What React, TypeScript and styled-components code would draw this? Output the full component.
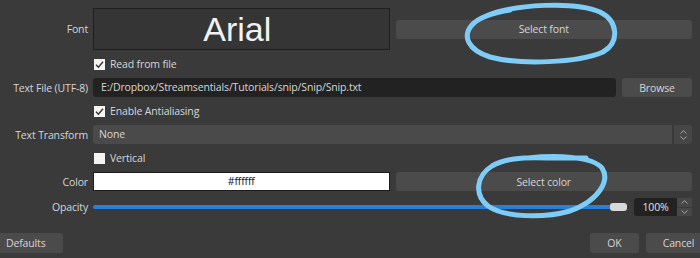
import styled, { createGlobalStyle } from "styled-components";

const GlobalStyle = createGlobalStyle`
  html, body {
    margin: 0;
    padding: 0;
    background: #3a3a3a;
    overflow: hidden;
  }
  body {
    font-family: "Open Sans", "Noto Sans", sans-serif;
    font-size: 10.5px;
    letter-spacing: -0.15px;
    color: #d6d6d6;
  }
`;

const Window = styled.div`
  position: relative;
  width: 700px;
  height: 258px;
  overflow: hidden;
  display: flex;
  flex-direction: column;
`;

const Scroll = styled.div`
  height: 228px;
  overflow: hidden;
  box-sizing: border-box;
  padding: 8px 8px 0 0;
`;

const Form = styled.div`
  display: grid;
  grid-template-columns: 88px 1fr;
  column-gap: 5px;
  row-gap: 4px;
  align-items: center;
`;

const Label = styled.div`
  text-align: right;
  white-space: nowrap;
`;

const Split = styled.div<{ $cols: string; $gap?: number }>`
  display: grid;
  grid-template-columns: ${(p) => p.$cols};
  column-gap: ${(p) => p.$gap ?? 6}px;
  align-items: center;
`;

const Preview = styled.div`
  height: 42px;
  box-sizing: border-box;
  border: 1px solid #1f1f1f;
  background: #353535;
  display: flex;
  align-items: center;
  justify-content: center;
  font-family: "Liberation Sans", Arial, sans-serif;
  font-size: 34px;
  letter-spacing: 0;
  color: #f2f2f2;
  padding-right: 8px;
`;

const Button = styled.button<{ $w?: number }>`
  height: 19px;
  width: ${(p) => (p.$w ? `${p.$w}px` : "100%")};
  border: none;
  border-radius: 3px;
  background: #4b4b4b;
  color: #d6d6d6;
  font: inherit;
  letter-spacing: inherit;
  padding: 0;
`;

const TextInput = styled.div`
  height: 19px;
  line-height: 19px;
  border-radius: 3px;
  background: #222222;
  padding: 0 8px;
  white-space: nowrap;
  overflow: hidden;
`;

const CheckRow = styled.div`
  height: 20px;
  display: flex;
  align-items: center;
  gap: 5px;
  padding-left: 1px;
`;

const Box = styled.span`
  width: 11px;
  height: 11px;
  background: #f4f4f4;
  display: inline-flex;
  align-items: center;
  justify-content: center;
`;

const Combo = styled.div`
  display: flex;
  gap: 2px;
  height: 19px;
`;

const ComboValue = styled.div`
  flex: 1;
  background: #4a4a4a;
  border-radius: 3px 0 0 3px;
  line-height: 19px;
  padding: 0 6px;
`;

const ComboArrows = styled.div`
  width: 18px;
  background: #464646;
  border-radius: 0 3px 3px 0;
  display: flex;
  flex-direction: column;
  align-items: center;
  justify-content: center;
  gap: 2px;
`;

const ColorBox = styled.div`
  height: 19px;
  box-sizing: border-box;
  border: 1px solid #1c1c1c;
  background: #ffffff;
  color: #111;
  text-align: center;
  line-height: 17px;
`;

const SliderRow = styled.div`
  height: 24px;
  display: flex;
  align-items: center;
`;

const Slider = styled.div`
  flex: 1;
  display: flex;
  align-items: center;
`;

const Track = styled.div`
  flex: 1;
  height: 4px;
  background: #2a7fd6;
  border-radius: 2px 0 0 2px;
`;

const Handle = styled.div`
  width: 17px;
  height: 8px;
  border-radius: 3px;
  background: #d8d8d8;
  margin-left: -1px;
`;

const Spin = styled.div`
  display: flex;
  margin-left: 7px;
  height: 18px;
`;

const SpinValue = styled.div`
  width: 43px;
  background: #222222;
  border-radius: 3px 0 0 3px;
  line-height: 18px;
  text-align: center;
  color: #e0e0e0;
`;

const SpinArrows = styled.div`
  width: 15px;
  display: flex;
  flex-direction: column;
  gap: 1px;
`;

const SpinBtn = styled.div`
  flex: 1;
  background: #474747;
  display: flex;
  align-items: center;
  justify-content: center;
`;

const BottomBar = styled.div`
  display: flex;
  justify-content: space-between;
  align-items: flex-start;
  padding-top: 5px;
`;

const RightGroup = styled.div`
  display: flex;
  gap: 7px;
  margin-right: -11px;
`;

const BarButton = styled(Button)<{ $left?: boolean }>`
  height: 20px;
  text-align: ${(p) => (p.$left ? "left" : "center")};
  padding-left: ${(p) => (p.$left ? "6px" : "0")};
  border-radius: ${(p) => (p.$left ? "0 3px 3px 0" : "3px")};
`;

const Annotations = styled.svg`
  position: absolute;
  left: 0;
  top: 0;
  pointer-events: none;
`;

function Check() {
  return (
    <svg width="9" height="9" viewBox="0 0 9 9">
      <path d="M1 4.8 L3.4 7.2 L8 1.8" fill="none" stroke="#333" strokeWidth="1.4" />
    </svg>
  );
}

function Chevron({ up }: { up?: boolean }) {
  return (
    <svg width="7" height="4" viewBox="0 0 7 4">
      <path
        d={up ? "M0.5 3.5 L3.5 0.7 L6.5 3.5" : "M0.5 0.5 L3.5 3.3 L6.5 0.5"}
        fill="none"
        stroke="#a8a8a8"
        strokeWidth="1"
      />
    </svg>
  );
}

function CheckItem({ label, checked }: { label: string; checked?: boolean }) {
  return (
    <>
      <span />
      <CheckRow>
        <Box>{checked && <Check />}</Box>
        <span>{label}</span>
      </CheckRow>
    </>
  );
}

export default function App() {
  return (
    <Window>
      <GlobalStyle />
      <Scroll>
        <Form>
          <Label>Font</Label>
          <Split $cols="1fr 1fr">
            <Preview>Arial</Preview>
            <Button>Select font</Button>
          </Split>

          <CheckItem label="Read from file" checked />

          <Label>Text File (UTF-8)</Label>
          <Split $cols="1fr 70px">
            <TextInput>E:/Dropbox/Streamsentials/Tutorials/snip/Snip/Snip.txt</TextInput>
            <Button>Browse</Button>
          </Split>

          <CheckItem label="Enable Antialiasing" checked />

          <Label>Text Transform</Label>
          <Combo>
            <ComboValue>None</ComboValue>
            <ComboArrows>
              <Chevron up />
              <Chevron />
            </ComboArrows>
          </Combo>

          <CheckItem label="Vertical" />

          <Label>Color</Label>
          <Split $cols="1fr 1fr">
            <ColorBox>#ffffff</ColorBox>
            <Button>Select color</Button>
          </Split>

          <Label>Opacity</Label>
          <SliderRow>
            <Slider>
              <Track />
              <Handle />
            </Slider>
            <Spin>
              <SpinValue>100%</SpinValue>
              <SpinArrows>
                <SpinBtn>
                  <Chevron up />
                </SpinBtn>
                <SpinBtn>
                  <Chevron />
                </SpinBtn>
              </SpinArrows>
            </Spin>
          </SliderRow>

          <CheckItem label="Gradient" />
        </Form>
      </Scroll>

      <BottomBar>
        <BarButton $w={63} $left>
          Defaults
        </BarButton>
        <RightGroup>
          <BarButton $w={49}>OK</BarButton>
          <BarButton $w={65}>Cancel</BarButton>
        </RightGroup>
      </BottomBar>

      <Annotations width="700" height="258" viewBox="0 0 700 258">
        <path
          d="M486 16 C515 4 575 1 600 12 C618 21 620 42 603 52 C578 63 520 65 490 57 C468 50 462 36 472 25 C478 18 492 13 510 10"
          fill="none"
          stroke="#7dcdf8"
          strokeWidth="5"
          strokeLinecap="round"
        />
        <path
          d="M528 158 C555 155 592 156 602 168 C610 180 600 200 570 211 C545 218 505 218 488 206 C474 195 476 176 492 166 C504 159 520 157 548 158 L586 158"
          fill="none"
          stroke="#7dcdf8"
          strokeWidth="5"
          strokeLinecap="round"
        />
      </Annotations>
    </Window>
  );
}
